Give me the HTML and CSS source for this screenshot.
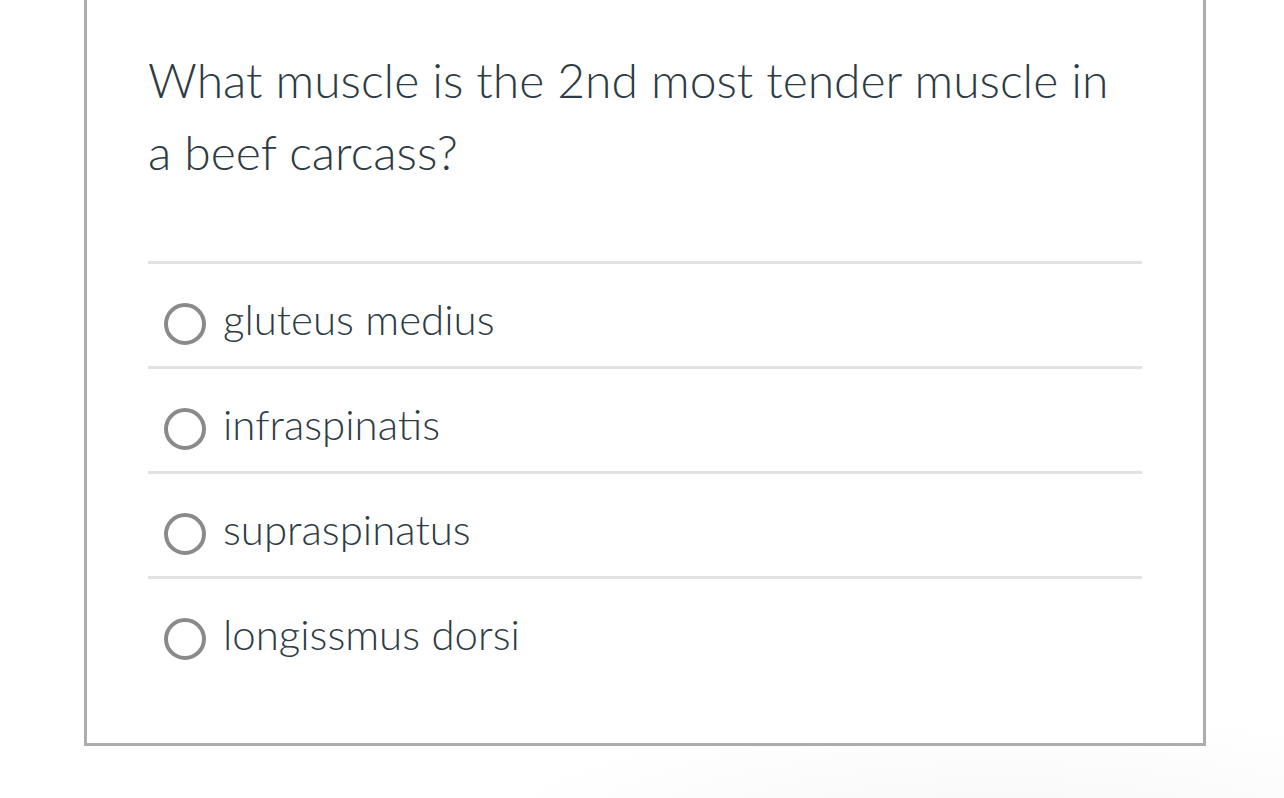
FILE: index.html
```html
<!DOCTYPE html>
<html lang="en">
<head>
<meta charset="utf-8">
<title>Quiz question</title>
<link rel="stylesheet" href="styles.css">
</head>
<body>
<div class="page">
  <div class="card">
    <div class="question">What muscle is the 2nd most tender muscle in a beef carcass?</div>
    <div class="answers">
      <label class="answer"><span class="radio"></span><span class="label">gluteus medius</span></label>
      <label class="answer"><span class="radio"></span><span class="label">infraspinatis</span></label>
      <label class="answer"><span class="radio"></span><span class="label">supraspinatus</span></label>
      <label class="answer"><span class="radio"></span><span class="label">longissmus dorsi</span></label>
    </div>
  </div>
</div>
</body>
</html>
```
FILE: styles.css
```css
html, body {
  margin: 0;
  padding: 0;
  background: #ffffff;
}
*, *::before, *::after {
  box-sizing: border-box;
}
body {
  font-family: "Lato Light", Lato, "Open Sans", sans-serif;
  color: #2d3b45;
  width: 1284px;
  height: 798px;
  overflow: hidden;
  background: radial-gradient(ellipse 520px 120px at 1000px 830px, #f7f7f7 0%, #ffffff 100%);
}
.page {
  padding-left: 84px;
}
.card {
  width: 1122px;
  border: 3px solid #acacac;
  border-top: none;
  background: #ffffff;
  padding: 44px 61px 62px 61px;
}
.question {
  font-size: 48px;
  font-weight: 300;
  line-height: 72px;
  padding-right: 20px;
}
.answers {
  margin-top: 73px;
}
.answer {
  display: flex;
  align-items: flex-start;
  border-top: 3px solid #e2e2e2;
  height: 105px;
  padding-left: 16px;
}
.radio {
  flex: none;
  width: 42px;
  height: 42px;
  border: 4px solid #8a8a8a;
  border-radius: 50%;
  margin-top: 39px;
}
.label {
  font-size: 42px;
  font-weight: 300;
  line-height: 54px;
  margin-left: 17px;
  margin-top: 28px;
}
```
